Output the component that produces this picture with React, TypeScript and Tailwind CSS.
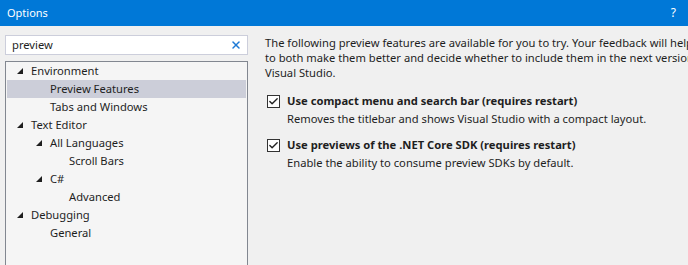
import { Check, X } from "lucide-react";

type Node = { label: string; level: number; expanded?: boolean; selected?: boolean };

const tree: Node[] = [
  { label: "Environment", level: 0, expanded: true },
  { label: "Preview Features", level: 1, selected: true },
  { label: "Tabs and Windows", level: 1 },
  { label: "Text Editor", level: 0, expanded: true },
  { label: "All Languages", level: 1, expanded: true },
  { label: "Scroll Bars", level: 2 },
  { label: "C#", level: 1, expanded: true },
  { label: "Advanced", level: 2 },
  { label: "Debugging", level: 0, expanded: true },
  { label: "General", level: 1 },
];

const features = [
  {
    title: "Use compact menu and search bar (requires restart)",
    desc: "Removes the titlebar and shows Visual Studio with a compact layout.",
  },
  {
    title: "Use previews of the .NET Core SDK (requires restart)",
    desc: "Enable the ability to consume preview SDKs by default.",
  },
];

const indent = ["pl-[10px]", "pl-[29px]", "pl-[48px]"];

function Arrow() {
  return (
    <svg width="6" height="6" viewBox="0 0 6 6" className="shrink-0">
      <polygon points="6,0 6,6 0,6" fill="#1e1e1e" />
    </svg>
  );
}

export default function App() {
  return (
    <div className="w-[688px] h-[265px] overflow-hidden bg-[#f0f0f0] font-['Segoe_UI','Noto_Sans',sans-serif] text-[11.2px] text-[#1e1e1e]">
      {/* Title bar */}
      <div className="h-[26px] bg-[#0078d7] text-white flex items-center justify-between pl-[7px] pr-[12px]">
        <span className="text-[11px]">Options</span>
        <span className="text-[12px]">?</span>
      </div>

      <div className="flex">
        {/* Left column */}
        <div className="w-[248px] pl-[5px] pt-[9px] shrink-0">
          <div className="h-[20px] bg-white border border-[#cccedb] flex items-center pl-[6px] pr-[5px]">
            <span className="flex-1 leading-none">preview</span>
            <X className="w-[12px] h-[12px] text-[#1e7ad6]" strokeWidth={3} />
          </div>
          <div className="mt-[6px] h-[220px] border border-[#828790] bg-[#f5f5f5] px-[1px]">
            {tree.map((n) => (
              <div
                key={n.label}
                className={`h-[18px] flex items-center ${indent[n.level]} ${n.selected ? "bg-[#ccced9]" : ""}`}
              >
                <span className="w-[14px] flex items-center">
                  {n.expanded && <Arrow />}
                </span>
                <span className="leading-none">{n.label}</span>
              </div>
            ))}
          </div>
        </div>

        {/* Right content */}
        <div className="flex-1 min-w-0 overflow-hidden pl-[17px] pt-[9px] whitespace-nowrap">
          <p className="leading-[15px]">
            The following preview features are available for you to try. Your feedback will help us
            <br />
            to both make them better and decide whether to include them in the next version of
            <br />
            Visual Studio.
          </p>
          <div className="mt-[12px] flex flex-col gap-[8px]">
            {features.map((f) => (
              <div key={f.title}>
                <div className="flex items-center h-[18px]">
                  <span className="ml-[2px] w-[13px] h-[13px] bg-white border border-[#333] flex items-center justify-center">
                    <Check className="w-[11px] h-[11px] text-[#222]" strokeWidth={3} />
                  </span>
                  <span className="ml-[7px] font-bold">{f.title}</span>
                </div>
                <div className="pl-[22px] h-[18px] flex items-center">{f.desc}</div>
              </div>
            ))}
          </div>
        </div>
      </div>
    </div>
  );
}
